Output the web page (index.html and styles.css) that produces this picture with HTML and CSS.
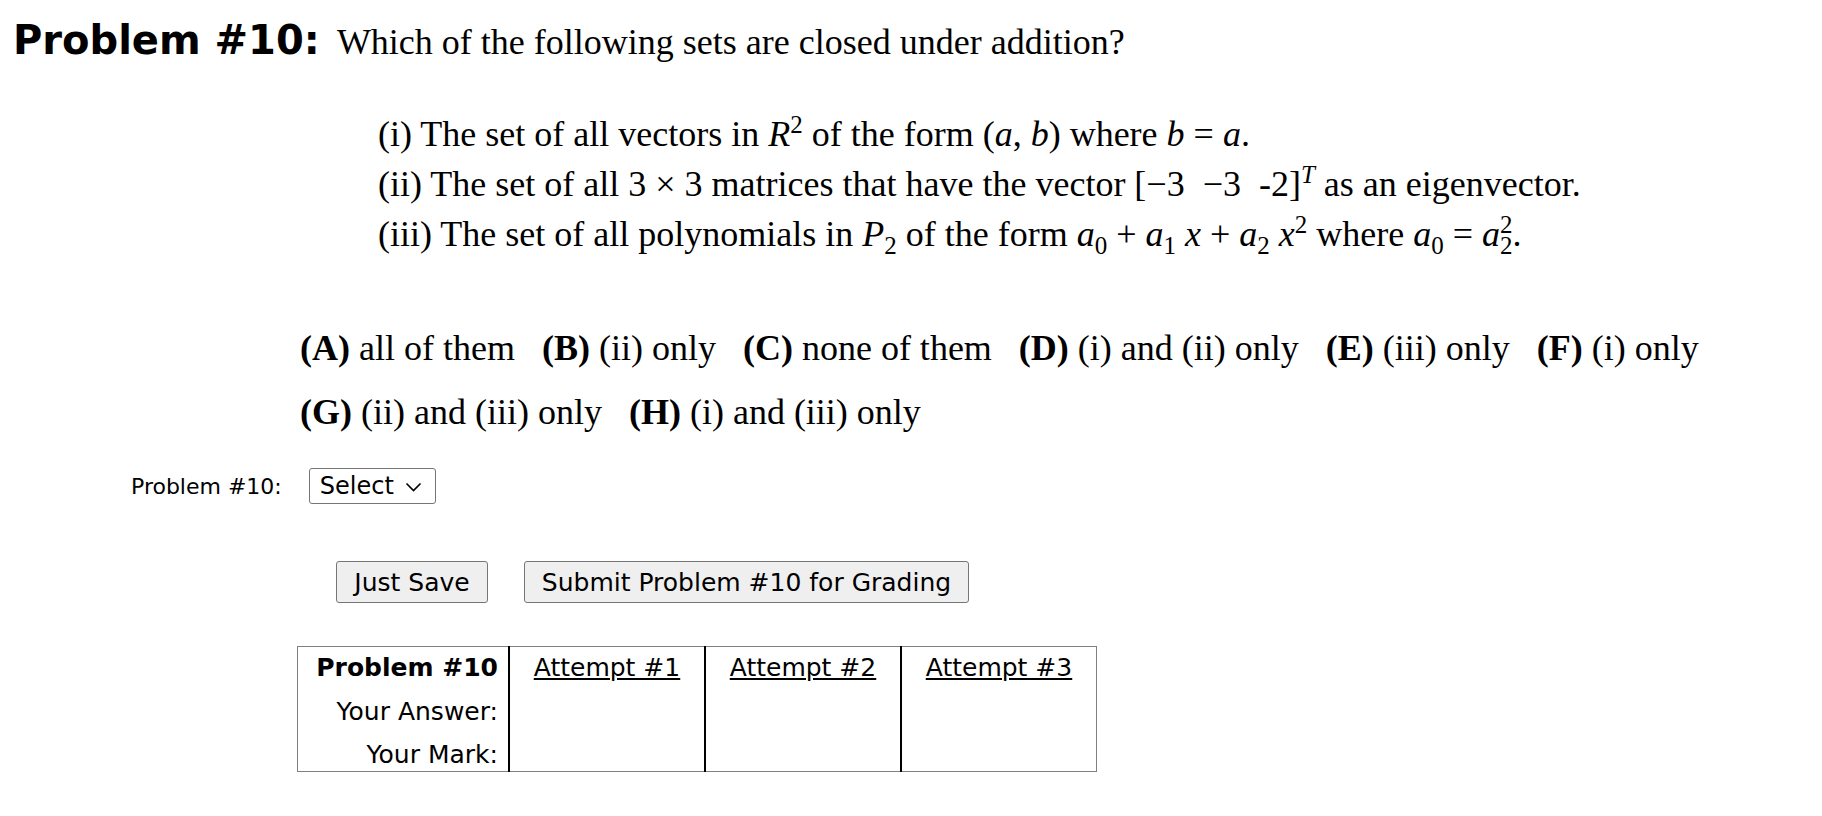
FILE: index.html
```html
<!DOCTYPE html>
<html lang="en">
<head>
    <meta charset="UTF-8">
    <title>Problem #10</title>
    <link rel="stylesheet" href="styles.css">
</head>
<body>
<div class="page">
    <div class="heading">
        <span class="prob-no">Problem #10:</span>
        <span class="question">Which of the following sets are closed under addition?</span>
    </div>

    <div class="statements">
        <div>(i) The set of all vectors in <i>R</i><sup>2</sup> of the form (<i>a</i>, <i>b</i>) where <i>b</i> = <i>a</i>.</div>
        <div>(ii) The set of all 3 × 3 matrices that have the vector [−3&nbsp;&nbsp;−3&nbsp;&nbsp;-2]<sup><i>T</i></sup> as an eigenvector.</div>
        <div>(iii) The set of all polynomials in <i>P</i><sub>2</sub> of the form <i>a</i><sub>0</sub> + <i>a</i><sub>1</sub> <i>x</i> + <i>a</i><sub>2</sub> <i>x</i><sup>2</sup> where <i>a</i><sub>0</sub> = <i>a</i><span class="supsub"><span>2</span><span>2</span></span>.</div>
    </div>

    <div class="choices">
        <div class="choice-row">
            <span><b>(A)</b> all of them</span>
            <span><b>(B)</b> (ii) only</span>
            <span><b>(C)</b> none of them</span>
            <span><b>(D)</b> (i) and (ii) only</span>
            <span><b>(E)</b> (iii) only</span>
            <span><b>(F)</b> (i) only</span>
        </div>
        <div class="choice-row">
            <span><b>(G)</b> (ii) and (iii) only</span>
            <span><b>(H)</b> (i) and (iii) only</span>
        </div>
    </div>

    <div class="answer-row">
        <label for="answer10">Problem #10:</label>
        <span class="select-wrap">
            <select id="answer10">
                <option>Select</option>
                <option>A</option>
                <option>B</option>
                <option>C</option>
                <option>D</option>
                <option>E</option>
                <option>F</option>
                <option>G</option>
                <option>H</option>
            </select>
            <svg class="chevron" width="17" height="10" viewBox="0 0 17 10"><polyline points="1.5,1.5 8.5,8.5 15.5,1.5" fill="none" stroke="#000" stroke-width="1.6"/></svg>
        </span>
    </div>

    <div class="buttons">
        <button class="btn-save">Just Save</button>
        <button class="btn-submit">Submit Problem #10 for Grading</button>
    </div>

    <table class="attempts">
        <tr class="first-row">
            <th>Problem #10</th>
            <td><a href="#">Attempt #1</a></td>
            <td><a href="#">Attempt #2</a></td>
            <td><a href="#">Attempt #3</a></td>
        </tr>
        <tr>
            <th class="row-label">Your Answer:</th>
            <td></td>
            <td></td>
            <td></td>
        </tr>
        <tr class="last-row">
            <th class="row-label">Your Mark:</th>
            <td></td>
            <td></td>
            <td></td>
        </tr>
    </table>
</div>
</body>
</html>
```

FILE: styles.css
```css
body {
    margin: 0;
    background-color: #fff;
    color: #000;
    font-family: "DejaVu Sans", Verdana, sans-serif;
}
.page {
    padding: 12px 13px;
}
.heading {
    line-height: 56px;
    white-space: nowrap;
}
.prob-no {
    font-weight: bold;
    font-size: 40px;
    margin-right: 12px;
}
.question {
    font-family: "Liberation Serif", "Times New Roman", serif;
    font-size: 36px;
}

/* problem statements */
.statements {
    margin-top: 32px;
    padding-left: 365px;
    font-family: "Liberation Serif", "Times New Roman", serif;
    font-size: 36px;
    line-height: 50px;
}
.statements sup,
.statements sub {
    font-size: 25px;
    line-height: 0;
}
.statements sup {
    vertical-align: 13px;
}
.statements sub {
    vertical-align: -8px;
}
.supsub {
    display: inline-flex;
    flex-direction: column;
    vertical-align: 13px;
    font-size: 25px;
    line-height: 21px;
}

/* answer choices */
.choices {
    margin-top: 57px;
    padding-left: 287px;
    font-family: "Liberation Serif", "Times New Roman", serif;
    font-size: 36px;
    line-height: 64px;
}
.choice-row {
    display: flex;
    gap: 27px;
    white-space: nowrap;
}

.answer-row {
    display: flex;
    align-items: center;
    gap: 27px;
    margin-top: 24px;
    padding-left: 118px;
    font-size: 22px;
}
.select-wrap {
    position: relative;
    display: inline-block;
}
.select-wrap select {
    appearance: none;
    -webkit-appearance: none;
    display: block;
    width: 127px;
    height: 36px;
    padding: 0 10px;
    font-family: "DejaVu Sans", Verdana, sans-serif;
    font-size: 24px;
    color: #000;
    background-color: #fff;
    border: 1.3px solid #767676;
    border-radius: 3px;
}
.chevron {
    position: absolute;
    right: 14px;
    top: 14px;
    pointer-events: none;
}

.buttons {
    display: flex;
    gap: 36px;
    margin-top: 57px;
    padding-left: 323px;
}
.buttons button {
    height: 42px;
    padding: 0 14px;
    font-family: "DejaVu Sans", Verdana, sans-serif;
    font-size: 25px;
    color: #000;
    background-color: #efefef;
    border: 1.3px solid #767676;
    border-radius: 3px;
}
.btn-save {
    width: 152px;
}
.btn-submit {
    width: 445px;
}

/* attempts table */
.attempts {
    margin-top: 43px;
    margin-left: 284px;
    border-collapse: collapse;
    border: 1.5px solid #808080;
    font-size: 25px;
}
.attempts th,
.attempts td {
    padding: 3px 10px 11px;
    line-height: 30px;
    vertical-align: top;
    white-space: nowrap;
}
.attempts .first-row th,
.attempts .first-row td {
    padding-top: 6px;
}
.attempts .last-row th,
.attempts .last-row td {
    padding: 2px 10px 1px;
}
.attempts th {
    width: 190px;
    text-align: right;
}
.attempts th.row-label {
    font-weight: normal;
}
.attempts td {
    width: 174px;
    border-left: 2px solid #000;
    text-align: center;
}
.attempts a {
    color: #000;
}
```
